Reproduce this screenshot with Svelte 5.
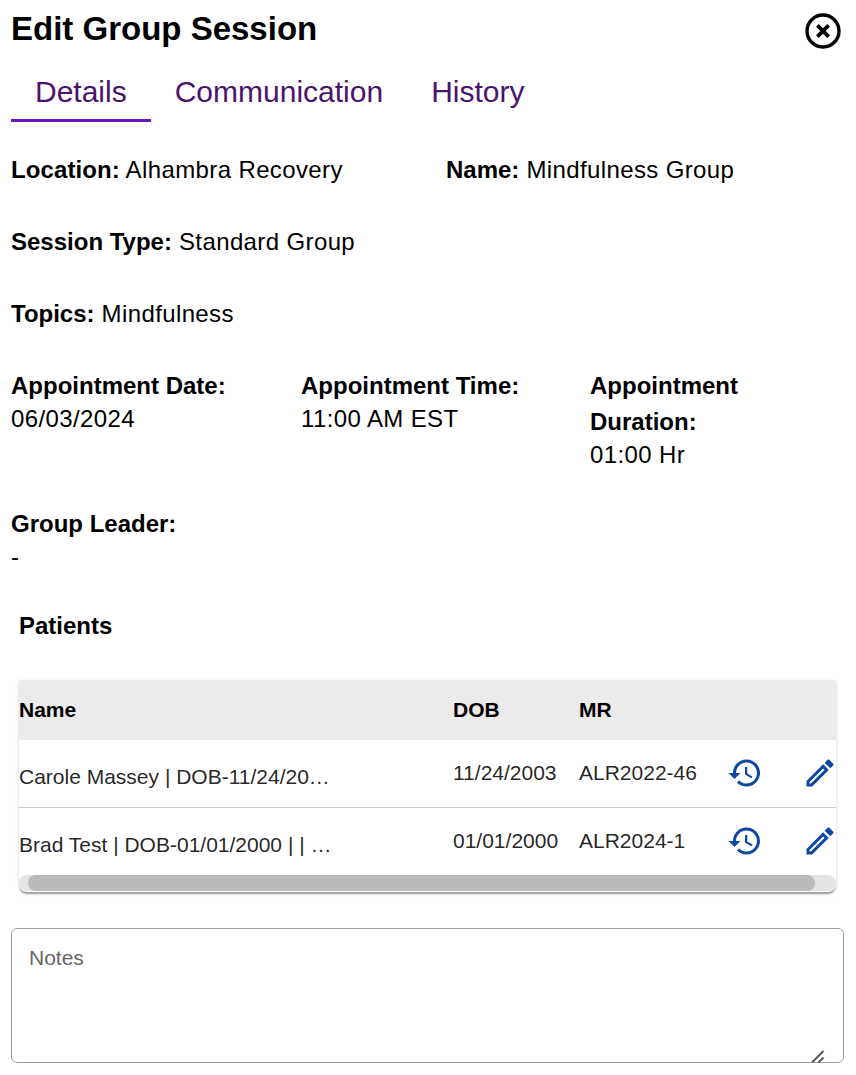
<script>
  const tabs = ["Details", "Communication", "History"];
  let active = $state("Details");
  let notes = $state("");

  const patients = [
    { name: "Carole Massey | DOB-11/24/20…", dob: "11/24/2003", mr: "ALR2022-46" },
    { name: "Brad Test | DOB-01/01/2000 | | …", dob: "01/01/2000", mr: "ALR2024-1" },
  ];
</script>

<div class="dialog">
  <header>
    <h1>Edit Group Session</h1>
    <button class="close" aria-label="Close">
      <svg width="36" height="36" viewBox="0 0 36 36" fill="none" stroke="#000">
        <circle cx="18" cy="18" r="16" stroke-width="3.4" />
        <path d="M12.4 12.4l11.2 11.2M23.6 12.4L12.4 23.6" stroke-width="3.8" />
      </svg>
    </button>
  </header>

  <nav>
    {#each tabs as tab}
      <button class="tab" class:active={active === tab} onclick={() => (active = tab)}>{tab}</button>
    {/each}
  </nav>

  <div class="row halves">
    <p><b>Location:</b> Alhambra Recovery</p>
    <p><b>Name:</b> Mindfulness Group</p>
  </div>
  <div class="row"><p><b>Session Type:</b> Standard Group</p></div>
  <div class="row"><p><b>Topics:</b> Mindfulness</p></div>

  <div class="row thirds">
    <div><b>Appointment Date:</b><span>06/03/2024</span></div>
    <div><b>Appointment Time:</b><span>11:00 AM EST</span></div>
    <div><b>Appointment Duration:</b><span>01:00 Hr</span></div>
  </div>
  <div class="row leader">
    <div><b>Group Leader:</b><span>-</span></div>
  </div>

  <h2>Patients</h2>
  <div class="table">
    <div class="tr head">
      <span>Name</span>
      <span>DOB</span>
      <span>MR</span>
    </div>
    {#each patients as patient}
      <div class="tr">
        <span class="name">{patient.name}</span>
        <span>{patient.dob}</span>
        <span>{patient.mr}</span>
        <button class="icon" aria-label="History">
          <svg width="36" height="36" viewBox="0 0 24 24">
            <path
              d="M13 3c-4.97 0-9 4.03-9 9H1l3.89 3.89.07.14L9 12H6c0-3.87 3.13-7 7-7s7 3.13 7 7-3.13 7-7 7c-1.93 0-3.68-.79-4.94-2.06l-1.42 1.42C8.27 19.99 10.51 21 13 21c4.97 0 9-4.03 9-9s-4.03-9-9-9zm-1 5v5l4.28 2.54.72-1.21-3.5-2.08V8H12z"
            />
          </svg>
        </button>
        <button class="icon" aria-label="Edit">
          <svg width="36" height="36" viewBox="0 0 24 24">
            <path
              d="M14.06 9.02l.92.92L5.92 19H5v-.92l9.06-9.06M17.66 3c-.25 0-.51.1-.7.29l-1.83 1.83 3.75 3.75 1.83-1.83c.39-.39.39-1.02 0-1.41l-2.34-2.34c-.2-.2-.45-.29-.71-.29zm-3.6 3.19L3 17.25V21h3.75L17.81 9.94l-3.75-3.75z"
            />
          </svg>
        </button>
      </div>
    {/each}
    <div class="scrollbar"><div class="thumb"></div></div>
  </div>

  <div class="notes">
    <textarea placeholder="Notes" bind:value={notes}></textarea>
    <svg class="grip" width="14" height="13" viewBox="0 0 14 13" stroke="#555" stroke-width="1.9">
      <path d="M1 12.5L12.5 1M7.5 12.5L12.5 7.5" />
    </svg>
  </div>
</div>

<style>
  :global(body) {
    margin: 0;
    background: #fff;
  }
  .dialog {
    box-sizing: border-box;
    width: 856px;
    height: 1075px;
    padding: 9px 12px 0 11px;
    overflow: hidden;
    font-family: "Liberation Sans", Arial, sans-serif;
    font-size: 24px;
    line-height: 36px;
    letter-spacing: 0.38px;
    color: #000;
  }
  button {
    padding: 0;
    border: none;
    background: none;
    font: inherit;
    cursor: pointer;
  }
  header {
    display: flex;
    justify-content: space-between;
    height: 52px;
  }
  h1 {
    margin: 0;
    font-size: 33px;
    line-height: 40px;
    letter-spacing: 0;
  }
  .close {
    width: 36px;
    height: 36px;
    margin: 4px 3px 0 0;
  }
  svg {
    display: block;
  }
  nav {
    display: flex;
    height: 61px;
    margin-bottom: 30px;
  }
  .tab {
    box-sizing: border-box;
    height: 61px;
    padding: 3px 24px 0;
    border-bottom: 3px solid transparent;
    font-size: 30px;
    letter-spacing: 0;
    color: #4a136c;
  }
  .active {
    border-color: #6918c4;
  }
  .row {
    margin-bottom: 36px;
  }
  p {
    margin: 0;
  }
  .halves {
    display: grid;
    grid-template-columns: 435px 1fr;
  }
  .halves p:first-child b {
    letter-spacing: 0.1px;
  }
  .thirds {
    display: grid;
    grid-template-columns: 290px 289px 200px;
  }
  .row b {
    letter-spacing: 0;
  }
  .row div b,
  .row span {
    display: block;
  }
  .row span {
    line-height: 30px;
  }
  h2 {
    margin: 0 0 36px 8px;
    font-size: 24px;
    line-height: 36px;
    letter-spacing: 0;
  }
  .table {
    box-sizing: border-box;
    width: 817px;
    height: 212px;
    margin: 0 0 36px 8px;
    border-radius: 3px 3px 8px 8px;
    box-shadow:
      0 3px 1.5px -1.5px rgba(0, 0, 0, 0.2),
      0 1.5px 1.5px rgba(0, 0, 0, 0.14),
      0 1.5px 4.5px rgba(0, 0, 0, 0.12);
    font-size: 21px;
    letter-spacing: 0;
    color: rgba(0, 0, 0, 0.87);
    overflow: hidden;
  }
  .tr {
    box-sizing: border-box;
    display: grid;
    grid-template-columns: 434px 126px 148px 75px 36px;
    align-items: center;
    height: 68px;
    padding-bottom: 2px;
    border-bottom: 1px solid #ccc;
  }
  .tr:nth-child(3) {
    height: 67px;
    border: none;
  }
  .head {
    height: 60px;
    padding: 0;
    border: none;
    background: #ebebeb;
    color: #000;
    font-weight: bold;
  }
  .name {
    padding-top: 8px;
  }
  .icon {
    fill: #0d47a1;
  }
  .scrollbar {
    height: 16px;
    padding: 0 21px 0 9px;
    border-radius: 8px;
    background: #e4e4e4;
  }
  .thumb {
    height: 16px;
    border-radius: 8px;
    background: #bababa;
  }
  .notes {
    position: relative;
    height: 135px;
  }
  textarea {
    box-sizing: border-box;
    display: block;
    width: 833px;
    height: 135px;
    padding: 16px 17px;
    border: 1px solid #9e9e9e;
    border-radius: 6px;
    outline: none;
    resize: none;
    font: 21px/26px "Liberation Sans", Arial, sans-serif;
    letter-spacing: 0;
  }
  textarea::placeholder {
    color: #666;
  }
  .grip {
    position: absolute;
    right: 19px;
    bottom: 0;
  }
</style>
